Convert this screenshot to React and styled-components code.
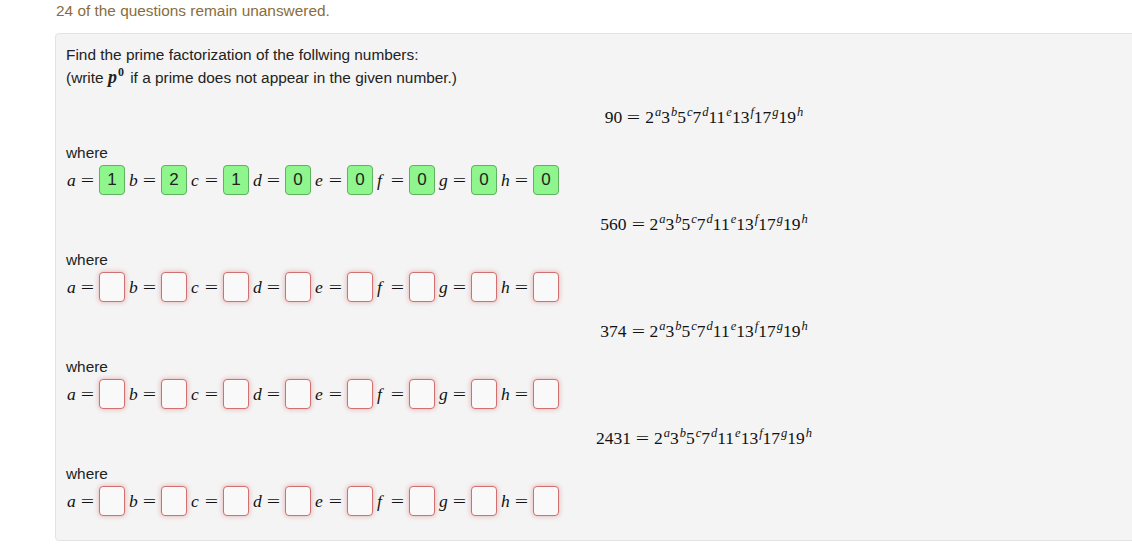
import React from 'react';
import styled, { createGlobalStyle, css } from 'styled-components';

const GlobalStyle = createGlobalStyle`
  html, body {
    margin: 0;
    padding: 0;
    overflow: hidden;
    background: #fff;
  }
  body {
    font-family: "Liberation Sans", Arial, sans-serif;
    font-size: 15.4px;
    color: #333;
  }
`;

const StyledPage = styled.div`
  padding: 3px 0 0 55px;
`;

const StyledNotice = styled.div`
  color: #8a6d3b;
  font-size: 15.4px;
  line-height: 16px;
  padding-left: 1px;
`;

const StyledWell = styled.div`
  margin-top: 14px;
  width: 1298px;
  box-sizing: border-box;
  padding: 9px 10px 23px 10px;
  background-color: #f4f4f4;
  border: 1px solid #e3e3e3;
  border-radius: 4px;
`;

const StyledIntroLine = styled.div`
  line-height: 23px;
  color: #222;
`;

const StyledBlock = styled.div`
  display: flex;
  flex-direction: column;
`;

const StyledFormula = styled.div`
  margin-top: 16px;
  height: 24px;
  line-height: 24px;
  text-align: center;
  font-family: "Liberation Serif", "Times New Roman", serif;
  font-size: 17.5px;
  color: #111;
`;

const StyledWhere = styled.div`
  margin-top: 14px;
  line-height: 20px;
  color: #222;
`;

const StyledRow = styled.div`
  margin-top: 1px;
  height: 32px;
  display: flex;
  align-items: center;
  font-family: "Liberation Serif", "Times New Roman", serif;
  font-size: 17.5px;
  color: #111;
`;

const StyledVar = styled.span`
  display: inline-block;
  width: 9px;
  font-style: italic;
  margin-left: ${p => (p.$first ? '1px' : '4px')};
`;

const StyledEq = styled.span`
  display: inline-block;
  width: 13px;
  text-align: center;
  font-style: normal;
  transform: scaleX(1.35);
  margin: 0 5px;
`;

const StyledSup = styled.sup`
  font-style: italic;
  font-size: 12.5px;
  vertical-align: 7px;
  line-height: 0;
  margin-left: 1px;
`;

const StyledIntroMath = styled.span`
  font-family: "Liberation Serif", "Times New Roman", serif;
  font-size: 18px;
  font-style: italic;
  font-weight: bold;
`;

const StyledIntroSup = styled.sup`
  font-family: "Liberation Serif", "Times New Roman", serif;
  font-size: 12px;
  font-style: normal;
  font-weight: bold;
  vertical-align: 7px;
  line-height: 0;
  margin: 0 2px 0 1px;
`;

const StyledBox = styled.span`
  box-sizing: border-box;
  display: inline-flex;
  align-items: center;
  justify-content: center;
  width: 26px;
  height: 30px;
  border-radius: 4px;
  font-family: "Liberation Sans", Arial, sans-serif;
  font-size: 17px;
  color: #222;
  ${p =>
    p.$correct
      ? css`
          background-color: #8ff58d;
          border: 1px solid #5fb35f;
        `
      : css`
          background-color: #f9f9f9;
          border: 1px solid #d07070;
          box-shadow: 0 0 5px rgba(210, 60, 60, 0.4);
        `}
`;

const variables = ['a', 'b', 'c', 'd', 'e', 'f', 'g', 'h'];
const primes = ['2', '3', '5', '7', '11', '13', '17', '19'];

const problems = [
  { n: '90', answers: ['1', '2', '1', '0', '0', '0', '0', '0'] },
  { n: '560', answers: null },
  { n: '374', answers: null },
  { n: '2431', answers: null },
];

function Formula({ n }) {
  return (
    <StyledFormula>
      {n}
      <StyledEq>=</StyledEq>
      {primes.map((p, i) => (
        <React.Fragment key={p}>
          {p}
          <StyledSup>{variables[i]}</StyledSup>
        </React.Fragment>
      ))}
    </StyledFormula>
  );
}

export default function App() {
  return (
    <StyledPage>
      <GlobalStyle />
      <StyledNotice>24 of the questions remain unanswered.</StyledNotice>
      <StyledWell>
        <StyledIntroLine>Find the prime factorization of the follwing numbers:</StyledIntroLine>
        <StyledIntroLine>
          (write <StyledIntroMath>p</StyledIntroMath>
          <StyledIntroSup>0</StyledIntroSup> if a prime does not appear in the given number.)
        </StyledIntroLine>
        {problems.map(problem => (
          <StyledBlock key={problem.n}>
            <Formula n={problem.n} />
            <StyledWhere>where</StyledWhere>
            <StyledRow>
              {variables.map((v, i) => (
                <React.Fragment key={v}>
                  <StyledVar $first={i === 0}>{v}</StyledVar>
                  <StyledEq>=</StyledEq>
                  <StyledBox $correct={!!problem.answers}>
                    {problem.answers ? problem.answers[i] : ''}
                  </StyledBox>
                </React.Fragment>
              ))}
            </StyledRow>
          </StyledBlock>
        ))}
      </StyledWell>
    </StyledPage>
  );
}
